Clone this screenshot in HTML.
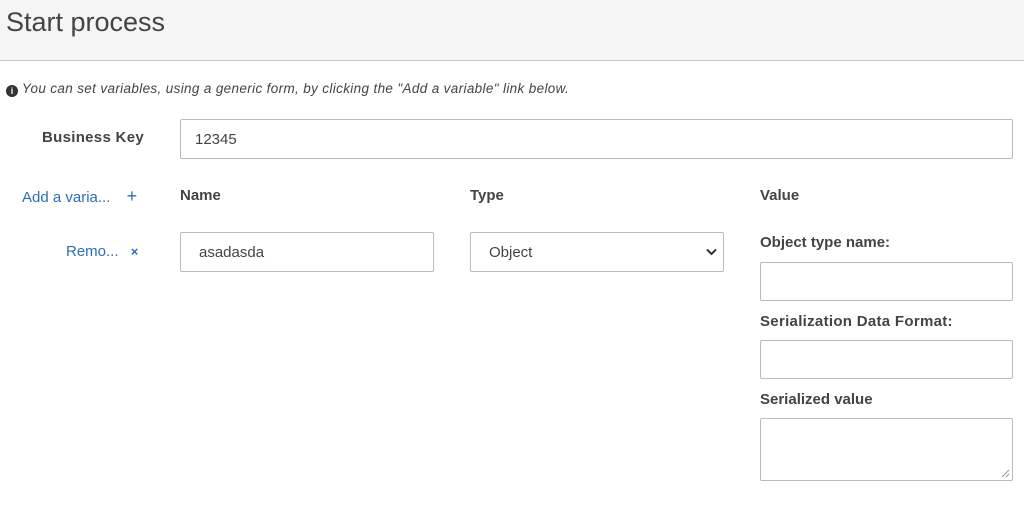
<!DOCTYPE html>
<html><head><style>
body{margin:0;width:1024px;height:509px;background:#fff;font-family:"Liberation Sans",sans-serif;color:#333;position:relative;overflow:hidden}
.hdr{position:absolute;left:0;top:0;width:1024px;height:60px;background:#f5f5f5;border-bottom:1px solid #ccc}
.hdr h1{margin:0;position:absolute;left:6px;top:7px;font-weight:normal;font-size:27px;color:#444}
.a{position:absolute;white-space:nowrap}
.b{font-weight:bold;font-size:15px;color:#444}
.in{position:absolute;border:1px solid #bbb;border-radius:2px;box-sizing:border-box;background:#fff;font-size:15px;color:#444;padding-left:18px;display:flex;align-items:center}
.lnk{color:#2a6fb5;font-size:15px}
</style></head><body>
<div class="hdr"><h1>Start process</h1></div>
<div class="a" style="left:6px;top:81px;font-size:13.5px;letter-spacing:0.35px;font-style:italic;color:#444"><span style="display:inline-block;width:12px;height:12px;border-radius:50%;background:#333;color:#fff;font-size:9px;font-style:normal;font-weight:bold;text-align:center;line-height:12px;vertical-align:-1px;letter-spacing:0">i</span> You can set variables, using a generic form, by clicking the "Add a variable" link below.</div>
<div class="a b" style="left:42px;top:129px;letter-spacing:0.3px">Business Key</div>
<div class="in" style="left:180px;top:119px;width:833px;height:40px;padding-left:14px">12345</div>
<div class="a lnk" style="left:22px;top:186px">Add a varia... <span style="margin-left:12px;font-size:18px">+</span></div>
<div class="a b" style="left:180px;top:187px">Name</div>
<div class="a b" style="left:470px;top:187px">Type</div>
<div class="a b" style="left:760px;top:187px">Value</div>
<div class="a lnk" style="left:66px;top:243px">Remo... <span style="margin-left:8px;font-weight:bold;font-size:13px">×</span></div>
<div class="in" style="left:180px;top:232px;width:254px;height:40px">asadasda</div>
<div class="in" style="left:470px;top:232px;width:254px;height:40px">Object<svg style="position:absolute;right:6px;top:15px" width="11" height="8" viewBox="0 0 11 8"><path d="M1 1.5l4.5 4.5 4.5-4.5" stroke="#333" stroke-width="2" fill="none"/></svg></div>
<div class="a b" style="left:760px;top:234px">Object type name:</div>
<div class="in" style="left:760px;top:262px;width:253px;height:39px"></div>
<div class="a b" style="left:760px;top:313px;letter-spacing:0.3px">Serialization Data Format:</div>
<div class="in" style="left:760px;top:340px;width:253px;height:39px"></div>
<div class="a b" style="left:760px;top:391px">Serialized value</div>
<div class="in" style="left:760px;top:418px;width:253px;height:63px"><svg style="position:absolute;right:2px;bottom:2px" width="9" height="9"><path d="M8 1L1 8M8 5L5 8" stroke="#999"/></svg></div>
</body></html>
